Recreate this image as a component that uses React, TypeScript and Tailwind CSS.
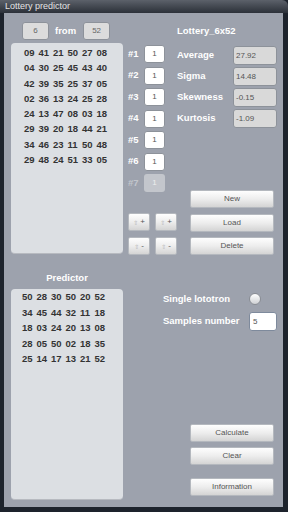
const history = [
  ['09', '41', '21', '50', '27', '08'],
  ['04', '30', '25', '45', '43', '40'],
  ['42', '39', '35', '25', '37', '05'],
  ['02', '36', '13', '24', '25', '28'],
  ['24', '13', '47', '08', '03', '18'],
  ['29', '39', '20', '18', '44', '21'],
  ['34', '46', '23', '11', '50', '48'],
  ['29', '48', '24', '51', '33', '05'],
]

const predicted = [
  ['50', '28', '30', '50', '20', '52'],
  ['34', '45', '44', '32', '11', '18'],
  ['18', '03', '24', '20', '13', '08'],
  ['28', '05', '50', '02', '18', '35'],
  ['25', '14', '17', '13', '21', '52'],
]

const stats = [
  { label: 'Average', value: '27.92' },
  { label: 'Sigma', value: '14.48' },
  { label: 'Skewness', value: '-0.15' },
  { label: 'Kurtosis', value: '-1.09' },
]

function Button({ label, className = '' }: { label: string; className?: string }) {
  return (
    <div className={`w-[84px] h-[18px] flex items-center justify-center rounded-[2px] border border-[#b4b8be] bg-linear-to-b from-[#fefefe] via-[#ededed] to-[#d4d4d4] text-[8px] text-[#555] ${className}`}>
      {label}
    </div>
  )
}

function SmallButton({ sign }: { sign: string }) {
  return (
    <div className="h-[18px] flex items-center justify-center gap-[2px] rounded-[2px] border border-[#b4b8be] bg-linear-to-b from-[#fefefe] via-[#ededed] to-[#d4d4d4] text-[8px]">
      <span className="font-['DejaVu_Sans'] text-[6px] text-[#b0b0b0]">⇧</span>
      <span className="text-[#555]">{sign}</span>
    </div>
  )
}

function Numbers({ rows, leading, pl }: { rows: string[][]; leading: string; pl: string }) {
  return (
    <div className={`grid grid-cols-[repeat(6,14.5px)] ${pl} ${leading} text-[9.5px] font-bold text-[#333]`}>
      {rows.flat().map((n, i) => (
        <span key={i}>{n}</span>
      ))}
    </div>
  )
}

export default function App() {
  return (
    <div className="w-[288px] h-[512px] bg-[#1d232c] flex flex-col font-['Liberation_Sans',Arial,sans-serif]">
      <div className="h-[13px] shrink-0 rounded-tr-[6px] bg-linear-to-b from-[#5c616a] to-[#2c3139] pl-[5px] text-[9px] leading-[13px] text-[#e4e4e4]">
        Lottery predictor
      </div>

      <div className="flex-1 flex pl-[4px] pr-[5px] pb-[5px]">
        <div className="flex-1 bg-[#9da2ad] flex flex-col">
          {/* top part */}
          <div className="flex items-start">
            <div className="ml-[7px] w-[112px] flex flex-col">
              <div className="mt-[9px] flex items-center h-[18px]">
                <div className="ml-[11px] w-[27px] h-[18px] flex items-center justify-center rounded-[3px] border border-[#8d929a] bg-[#dcdcdc] text-[8px] text-[#666]">6</div>
                <span className="ml-[6px] text-[9.5px] font-bold text-white">from</span>
                <div className="ml-[7px] w-[27px] h-[18px] flex items-center justify-center rounded-[3px] border border-[#8d929a] bg-[#dcdcdc] text-[8px] text-[#666]">52</div>
              </div>
              <div className="mt-[3px] h-[211px] rounded-[4px] bg-[#dcdfe3] border-b border-[#b7bac0] pt-[2px]">
                <Numbers rows={history} leading="leading-[15.25px]" pl="pl-[13px]" />
              </div>
            </div>

            <div className="ml-[5px] w-[49px] pt-[32px] flex flex-col">
              <div className="flex flex-col gap-[3.5px]">
                {[1, 2, 3, 4, 5, 6, 7].map((n) => (
                  <div key={n} className="flex items-center h-[18px]">
                    <span className={`w-[16px] text-[9.5px] font-bold ${n === 7 ? 'text-white/40' : 'text-white'}`}>#{n}</span>
                    <div className={`w-[21px] h-[18px] flex items-center justify-center rounded-[3px] text-[8px] ${n === 7 ? 'bg-[#c3c6cc] text-[#eee]' : 'bg-white border border-[#8d929a] text-[#555]'}`}>1</div>
                  </div>
                ))}
              </div>
              <div className="mt-[21px] grid grid-cols-[22px_22px] gap-x-[5px] gap-y-[6px]">
                <SmallButton sign="+" />
                <SmallButton sign="+" />
                <SmallButton sign="-" />
                <SmallButton sign="-" />
              </div>
            </div>

            <div className="w-[100px] pt-[12px] flex flex-col">
              <div className="h-[12px] leading-[12px] text-[9.5px] font-bold text-white">Lottery_6x52</div>
              <div className="mt-[9px] flex flex-col gap-[2px]">
                {stats.map((s) => (
                  <div key={s.label} className="flex items-center justify-between h-[19px]">
                    <span className="text-[9.5px] font-bold text-white">{s.label}</span>
                    <div className="w-[44px] h-[19px] flex items-center pl-[2px] rounded-[3px] border border-[#8d929a] bg-[#d9d9d9] text-[8px] text-[#555]">{s.value}</div>
                  </div>
                ))}
              </div>
              <div className="mt-[62px] ml-[13px] flex flex-col gap-[5.5px]">
                <Button label="New" />
                <Button label="Load" />
                <Button label="Delete" />
              </div>
            </div>
          </div>

          {/* bottom part */}
          <div className="flex items-start">
            <div className="ml-[7px] w-[112px] flex flex-col">
              <div className="mt-[17px] h-[12px] leading-[12px] text-center text-[9.5px] font-bold text-white">Predictor</div>
              <div className="mt-[5px] h-[211px] rounded-[4px] bg-[#dcdfe3] border-b border-[#b7bac0]">
                <Numbers rows={predicted} leading="leading-[15.5px]" pl="pl-[11px]" />
              </div>
            </div>

            <div className="ml-[40px] w-[114px] mt-[37px] flex flex-col">
              <div className="flex items-center h-[14px]">
                <span className="w-[86px] text-[9.5px] font-bold text-white">Single lototron</span>
                <div className="w-[12px] h-[12px] rounded-full border border-[#8a8e95] bg-linear-to-b from-white to-[#cfd1d4]" />
              </div>
              <div className="mt-[6px] flex items-center h-[19px]">
                <span className="w-[86px] text-[9.5px] font-bold text-white">Samples number</span>
                <div className="w-[28px] h-[19px] flex items-center pl-[3px] rounded-[3px] border border-[#7e8a9c] bg-white text-[8px] text-[#555]">5</div>
              </div>
              <div className="mt-[93px] ml-[27px] flex flex-col">
                <Button label="Calculate" />
                <Button label="Clear" className="mt-[5px]" />
                <Button label="Information" className="mt-[13px]" />
              </div>
            </div>
          </div>
        </div>
      </div>
    </div>
  )
}
